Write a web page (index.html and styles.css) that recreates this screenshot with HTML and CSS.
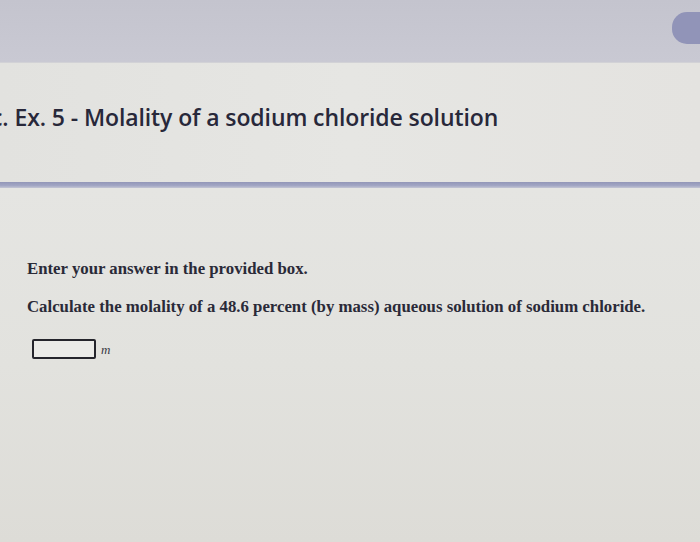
FILE: index.html
```html
<!DOCTYPE html>
<html>
<head>
<meta charset="utf-8">
<link rel="stylesheet" href="styles.css">
</head>
<body>
<div class="page">
  <header class="topbar">
    <span class="pill"></span>
  </header>
  <section class="titlebar">
    <h1 class="title">c. Ex. 5 - Molality of a sodium chloride solution</h1>
  </section>
  <div class="divider"></div>
  <main class="content">
    <p class="line first">Enter your answer in the provided box.</p>
    <p class="line">Calculate the molality of a 48.6 percent (by mass) aqueous solution of sodium chloride.</p>
    <div class="answer">
      <span class="box"></span>
      <span class="unit">m</span>
    </div>
  </main>
</div>
</body>
</html>
```

FILE: styles.css
```css
html, body {
  margin: 0;
  padding: 0;
  width: 700px;
  height: 542px;
  overflow: hidden;
  background: #dcdcd8;
}
.page {
  display: flex;
  flex-direction: column;
  height: 542px;
}
.topbar {
  height: 62px;
  background: linear-gradient(180deg, #c4c4ce 0%, #c9c9d3 100%);
  display: flex;
  justify-content: flex-end;
  align-items: flex-start;
  border-bottom: 1px solid #d2d2d6;
}
.pill {
  width: 28px;
  height: 32px;
  margin-top: 12px;
  border-radius: 15px 0 0 15px;
  background: #9194b8;
}
.titlebar {
  height: 119px;
  background: linear-gradient(90deg, #e2e2df 0%, #e6e6e3 50%, #e4e3e0 100%);
  display: flex;
  align-items: flex-start;
}
.title {
  margin: 0;
  margin-top: 38px;
  margin-left: -9px;
  font-family: "Open Sans", "Noto Sans", sans-serif;
  font-weight: 600;
  font-size: 23px;
  color: #28283a;
  letter-spacing: -0.1px;
  white-space: nowrap;
}
.divider {
  height: 6px;
  background: linear-gradient(180deg, #9296b8 0%, #a2a6c4 60%, #c4c6d4 100%);
}
.content {
  flex: 1;
  padding: 71px 27px 0;
  background: linear-gradient(180deg, #e5e5e2 0%, #e2e2de 50%, #dddcd7 100%);
}
.line {
  margin: 0 0 18px;
  font-family: "Liberation Serif", "Times New Roman", serif;
  font-weight: 700;
  font-size: 16.8px;
  color: #2a2a38;
  line-height: 20px;
}
.answer {
  display: flex;
  align-items: center;
  gap: 5px;
  margin-left: 5px;
  margin-top: 22px;
}
.box {
  width: 60px;
  height: 16px;
  border: 2px solid #25252c;
  border-radius: 2px;
  background: #ebebe8;
}
.unit {
  font-family: "Liberation Serif", serif;
  font-style: italic;
  font-size: 13px;
  color: #3a3a44;
  margin-top: 2px;
}
```
